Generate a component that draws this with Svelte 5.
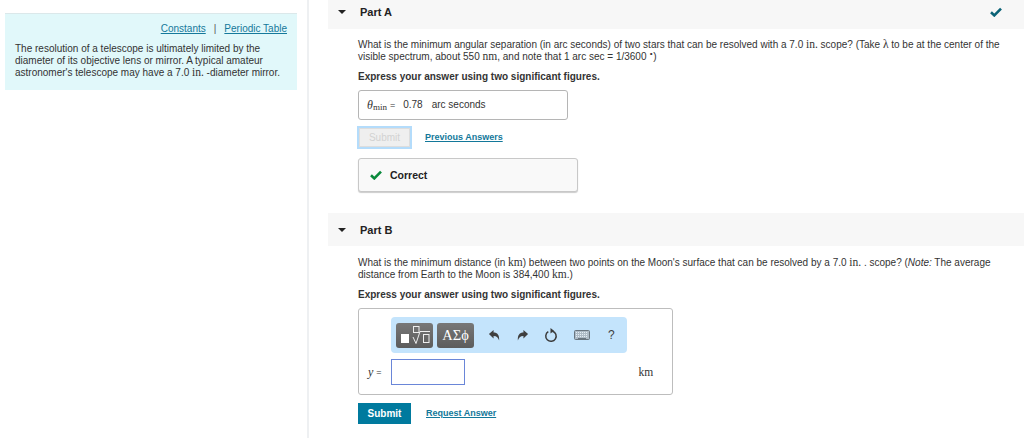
<script>
	// key rows drawn by the keyboard glyph in the toolbar
	const keyRows = [2.5, 4.5, 6.5];
</script>

<div class="page">
	<aside class="side">
		<div class="intro">
			<div class="links">
				<a href="#c">Constants</a><span class="sep">|</span><a href="#p">Periodic Table</a>
			</div>
			<p>
				The resolution of a telescope is ultimately limited by the diameter of its objective lens or
				mirror. A typical amateur astronomer's telescope may have a 7.0 <span class="m">in.</span> -diameter mirror.
			</p>
		</div>
	</aside>

	<main class="parts">
		<section class="part-a">
			<header class="head">
				<span class="caret"></span>
				<h2>Part A</h2>
				<svg class="done" width="12" height="10" viewBox="0 0 12 10">
					<path d="M1 5.2 L4.3 8.4 L11 1.6" fill="none" stroke="#0b6377" stroke-width="2.6" />
				</svg>
			</header>
			<div class="body">
				<p class="q">
					What is the minimum angular separation (in arc seconds) of two stars that can be resolved with a 7.0
					<span class="m">in.</span> scope? (Take <span class="m">λ</span> to be at the center of the visible spectrum, about
					550 <span class="m">nm</span>, and note that 1 arc sec = 1/3600 <sup>∘</sup>)
				</p>
				<p class="ask">Express your answer using two significant figures.</p>
				<div class="answer">
					<span class="var">θ<sub>min</sub></span><span class="eq">=</span><span>0.78</span><span class="unit">arc seconds</span>
				</div>
				<div class="actions">
					<button class="btn off" type="button">Submit</button>
					<a href="#a" class="act">Previous Answers</a>
				</div>
				<div class="result">
					<svg width="12" height="10" viewBox="0 0 12 10">
						<path d="M1 5.2 L4.3 8.4 L11 1.6" fill="none" stroke="#0a8a3c" stroke-width="2.6" />
					</svg>
					<b>Correct</b>
				</div>
			</div>
		</section>

		<section class="part-b">
			<header class="head">
				<span class="caret"></span>
				<h2>Part B</h2>
			</header>
			<div class="body">
				<p class="q">
					What is the minimum distance (in <span class="m">km</span>) between two points on the Moon's surface that can be resolved by a 7.0
					<span class="m">in.</span> . scope? (<i>Note:</i> The average distance from Earth to the Moon is 384,400 <span class="m">km</span>.)
				</p>
				<p class="ask">Express your answer using two significant figures.</p>
				<div class="editor">
					<div class="toolbar">
						<span class="tool wide">
							<svg width="37" height="25" viewBox="0 0 37 25">
								<rect x="5" y="11" width="8" height="9" fill="#fff" />
								<rect x="17.500" y="3.500" width="5.500" height="6" fill="none" stroke="#eee" />
								<path d="M17 14 L20 20.500 L24 8.500 H34" fill="none" stroke="#eee" />
								<rect x="27.500" y="11.500" width="5.500" height="8" fill="none" stroke="#eee" />
							</svg>
						</span>
						<span class="tool greek">ΑΣϕ</span>
						<svg class="icon first" width="13" height="13" viewBox="0 0 14 14">
							<path d="M1 5.500 L6 1 V3.800 C10 3.800 12.500 6.500 12 12.500 C11 9.500 9.500 7.500 6 7.500 V10.200 Z" fill="#3f3f3f" />
						</svg>
						<svg class="icon" width="13" height="13" viewBox="0 0 14 14">
							<path d="M13 5.500 L8 1 V3.800 C4 3.800 1.500 6.500 2 12.500 C3 9.500 4.500 7.500 8 7.500 V10.200 Z" fill="#3f3f3f" />
						</svg>
						<svg class="icon" width="14" height="15" viewBox="0 0 14 15">
							<path d="M8.500 3.200 A5.200 5.200 0 1 1 4.300 3.700" fill="none" stroke="#3a3a3a" stroke-width="1.500" />
							<path d="M6.500 0 V5.500 L10 2.800 Z" fill="#3a3a3a" />
						</svg>
						<svg class="kbd" width="16" height="10" viewBox="0 0 16 10">
							<rect x="0.500" y="0.500" width="15" height="9" rx="1" fill="#aebbc6" stroke="#69757f" />
							{#each keyRows as y}
								<path d="M2 {y} H14" stroke="#e4edf4" stroke-dasharray="1 1" />
							{/each}
							<path d="M4 8.500 H12" stroke="#69757f" />
						</svg>
						<span class="help">?</span>
					</div>
					<div class="entry">
						<span class="y">y</span><span class="eq">=</span>
						<input type="text" aria-label="y" />
						<span class="km">km</span>
					</div>
				</div>
				<div class="actions last">
					<button class="btn" type="button">Submit</button>
					<a href="#r" class="act">Request Answer</a>
				</div>
			</div>
		</section>
	</main>
</div>

<style>
	:global(body) {
		margin: 0;
		background: #fff;
	}
	.page {
		display: flex;
		width: 1024px;
		height: 438px;
		overflow: hidden;
		font-family: 'Liberation Sans', Arial, sans-serif;
		font-size: 10px;
		line-height: 12px;
		color: #333;
	}
	.side {
		box-sizing: border-box;
		width: 309px;
		flex: none;
		padding: 13px 10px 0 5px;
		border-right: 2px solid #eef0f2;
	}
	.intro {
		height: 77px;
		box-sizing: border-box;
		background: #e1f8fa;
		border-top: 1px solid #dbe8ea;
		padding: 9px 10px 0 10px;
	}
	.links {
		display: flex;
		justify-content: flex-end;
		gap: 8px;
		margin-bottom: 8px;
		color: #555;
	}
	.links a {
		color: #15799b;
		text-decoration: underline;
	}
	.intro p {
		margin: 0;
		width: 270px;
	}
	.m {
		font-family: 'Liberation Serif', 'DejaVu Serif', serif;
		font-size: 11.500px;
		line-height: 0;
	}
	.parts {
		flex: 1;
		min-width: 0;
		padding-left: 19px;
	}
	.head {
		display: flex;
		align-items: center;
		background: #f7f7f7;
	}
	.part-a .head {
		height: 29px;
		padding-bottom: 5px;
		box-sizing: border-box;
	}
	.part-b .head {
		height: 33px;
	}
	.caret {
		margin-left: 10px;
		border-left: 4px solid transparent;
		border-right: 4px solid transparent;
		border-top: 4px solid #222;
	}
	h2 {
		margin: 0 0 0 14px;
		font-size: 11px;
		font-weight: bold;
		color: #222;
	}
	.done {
		margin-left: auto;
		margin-right: 22px;
	}
	.body {
		padding-left: 30px;
	}
	.q {
		margin: 0;
		padding-top: 10px;
		width: 645px;
	}
	.part-b .q {
		padding-top: 11px;
	}
	sup {
		font-size: 7px;
		line-height: 0;
	}
	.ask {
		margin: 8px 0 0;
		font-weight: bold;
	}
	.answer {
		box-sizing: border-box;
		display: flex;
		align-items: center;
		width: 210px;
		height: 30px;
		margin-top: 7px;
		padding-left: 8px;
		border: 1px solid #b5b5b5;
		border-radius: 3px;
	}
	.var {
		font-family: 'Liberation Serif', serif;
		font-style: italic;
		font-size: 12px;
		line-height: 12px;
	}
	.var sub {
		font-style: normal;
		font-size: 9px;
		line-height: 0;
		vertical-align: -1px;
	}
	.eq {
		margin: 0 8px 0 3px;
		font-size: 9px;
	}
	.unit {
		margin-left: 9px;
	}
	.actions {
		display: flex;
		align-items: center;
		margin-top: 8px;
	}
	.btn {
		box-sizing: border-box;
		width: 53px;
		height: 21px;
		padding: 0;
		border: none;
		background: #007a9e;
		color: #fff;
		font: bold 10px 'Liberation Sans', Arial, sans-serif;
	}
	.btn.off {
		margin-left: 1px;
		background: #efefef;
		color: #d2d2d2;
		border: 1px solid #ddd;
		box-shadow: 0 0 0 2px #b4dcfb;
		width: 51px;
		height: 19px;
		font-weight: normal;
	}
	.act {
		margin-left: 15px;
		margin-top: -2px;
		color: #13789a;
		font-weight: bold;
		font-size: 9px;
		text-decoration: underline;
	}
	.result {
		box-sizing: border-box;
		display: flex;
		align-items: center;
		gap: 8px;
		width: 220px;
		height: 34px;
		margin-top: 11px;
		padding-left: 11px;
		background: #f9f9f9;
		border: 1px solid #c8c8c8;
		border-radius: 3px;
		box-shadow: 0 1px 1px #ccc;
		color: #222;
		font-size: 10.500px;
	}
	.part-b {
		margin-top: 21px;
	}
	.editor {
		box-sizing: border-box;
		width: 315px;
		height: 87px;
		margin-top: 7px;
		border: 1px solid #bdbdbd;
		border-radius: 3px;
		padding: 8px 0 0 0;
	}
	.toolbar {
		box-sizing: border-box;
		display: flex;
		align-items: center;
		width: 236px;
		height: 36px;
		margin-left: 32px;
		padding-left: 5px;
		background: #c4e4fc;
		border-radius: 4px;
	}
	.tool {
		box-sizing: border-box;
		display: flex;
		align-items: center;
		justify-content: center;
		width: 37px;
		height: 25px;
		border-radius: 3px;
		background: linear-gradient(#777, #5c5c5c);
	}
	.greek {
		margin-left: 4px;
		color: #fff;
		font-family: 'Liberation Serif', serif;
		font-size: 14.500px;
		line-height: 25px;
	}
	.icon {
		margin-left: 15px;
		flex: none;
	}
	.icon.first {
		margin-left: 14px;
	}
	.kbd {
		flex: none;
		margin-left: 16px;
	}
	.help {
		margin-left: 18px;
		font-size: 12px;
		color: #3f3f3f;
	}
	.entry {
		display: flex;
		align-items: center;
		margin-top: 6px;
		padding-left: 9px;
		height: 26px;
	}
	.y {
		font-family: 'Liberation Serif', serif;
		font-style: italic;
		font-size: 12px;
	}
	.entry .eq {
		margin: 0 9px 0 3px;
	}
	input {
		box-sizing: border-box;
		width: 74px;
		height: 26px;
		margin: 0;
		padding: 0;
		background: #fff;
		border: 1px solid #6a86d8;
	}
	.km {
		margin-left: 174px;
		font-family: 'Liberation Serif', serif;
		font-size: 11.500px;
	}
	.last {
		margin-top: 8px;
	}
</style>
